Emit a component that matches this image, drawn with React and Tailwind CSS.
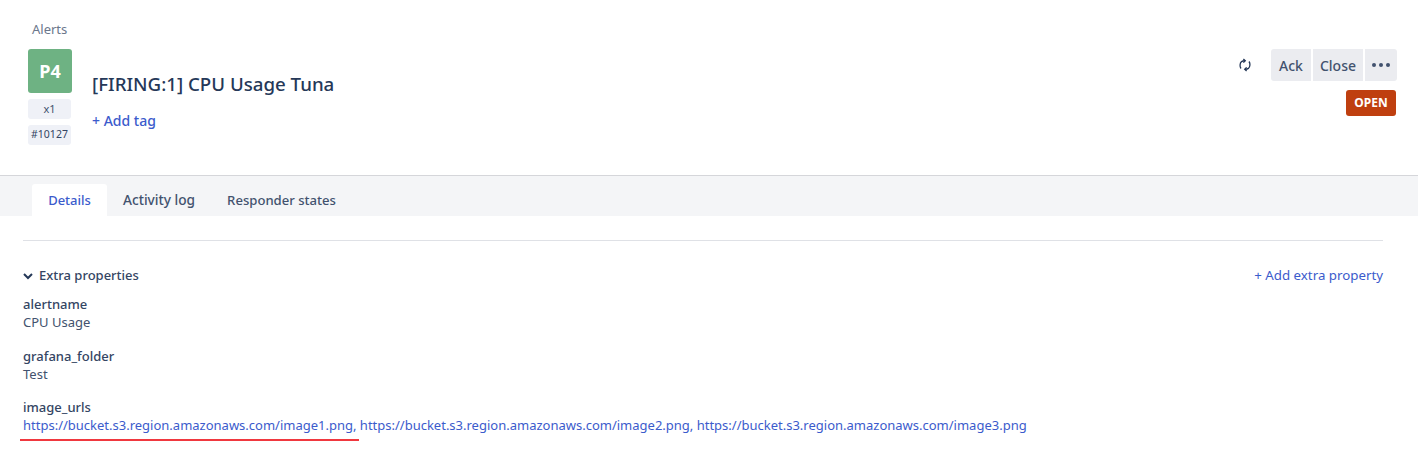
import React from 'react';

const font = "font-['Noto_Sans','Open_Sans',sans-serif]";

const Prop = ({ name, children }) => (
  <div className="mb-[16px]">
    <div className="text-[13px] leading-[18px] font-medium text-[#344563]">{name}</div>
    <div className="text-[13px] leading-[18px] text-[#42526e]">{children}</div>
  </div>
);

const Links = () => (
  <div className="relative w-fit">
    <div className="text-[13px] leading-[18px] text-[#3b5bcc] whitespace-nowrap">
      https://bucket.s3.region.amazonaws.com/image1.png, https://bucket.s3.region.amazonaws.com/image2.png, https://bucket.s3.region.amazonaws.com/image3.png
    </div>
    <div className="absolute left-[-3px] top-[23px] w-[339px] h-[2px] bg-[#f0383f]" />
  </div>
);

export default function App() {
  return (
    <div className={`${font} w-[1418px] h-[461px] bg-white overflow-hidden`}>
      <header className="h-[176px] border-b border-[#d5d6da] relative pl-[28px] pr-[21px] pt-[20px]">
        <div className="pl-[4px] text-[13px] leading-[18px] text-[#6b778c]">Alerts</div>
        <div className="flex mt-[11px]">
          <div className="w-[44px] flex flex-col">
            <div className="h-[44px] rounded-[3px] bg-[#6eb283] text-white font-bold text-[18px] flex items-center justify-center">P4</div>
            <div className="mt-[6px] w-[43px] h-[20px] rounded-[3px] bg-[#eff1f7] text-[11px] text-[#42526e] flex items-center justify-center">x1</div>
            <div className="mt-[6px] w-[43px] h-[20px] rounded-[3px] bg-[#eff1f7] text-[10.5px] text-[#344563] flex items-center justify-center">#10127</div>
          </div>
          <div className="ml-[20px] pt-[21px]">
            <h1 className="text-[18.7px] leading-[28px] font-medium text-[#253858]">[FIRING:1] CPU Usage Tuna</h1>
            <div className="mt-[14px] text-[14px] leading-[18px] font-medium text-[#3b5bcc]">+ Add tag</div>
          </div>
          <div className="ml-auto flex flex-col items-end">
            <div className="flex items-center gap-[2px]">
              <svg className="w-[14px] h-[14px] mr-[17px] text-[#253858]" viewBox="0 0 14 14" fill="none" stroke="currentColor" strokeWidth="1.3">
                <path d="M3 10.5C1.6 8.6 1.7 5.2 3.6 3.6c1-.7 2.2-.9 3.4-.8" />
                <path d="M5.4 1 7.3 2.8 5.4 4.6" />
                <path d="M11 3.5c1.4 1.9 1.3 5.3-.6 6.9-1 .7-2.2.9-3.4.8" />
                <path d="M8.6 9.4 6.7 11.2 8.6 13" />
              </svg>
              <button className="h-[32px] w-[40px] rounded-l-[3px] bg-[#ebecf0] text-[14px] font-medium text-[#42526e]">Ack</button>
              <button className="h-[32px] w-[50px] bg-[#ebecf0] text-[14px] font-medium text-[#42526e]">Close</button>
              <button className="h-[32px] w-[32px] rounded-r-[3px] bg-[#ebecf0] flex items-center justify-center gap-[3px]">
                <span className="w-[4px] h-[4px] rounded-full bg-[#42526e]" />
                <span className="w-[4px] h-[4px] rounded-full bg-[#42526e]" />
                <span className="w-[4px] h-[4px] rounded-full bg-[#42526e]" />
              </button>
            </div>
            <div className="mt-[9px] mr-[1px] w-[50px] h-[26px] rounded-[3px] bg-[#bf3f0f] text-white text-[12px] font-bold flex items-center justify-center">OPEN</div>
          </div>
        </div>
      </header>
      <nav className="h-[40px] bg-[#f4f5f7] pt-[8px] pl-[32px] flex">
        <div className="w-[75px] h-[32px] pt-[1px] rounded-t-[3px] bg-white text-[13px] font-medium text-[#3b5bcc] flex items-center justify-center">Details</div>
        <div className="px-[16px] h-[32px] pt-[1px] text-[13.7px] font-medium text-[#42526e] flex items-center">Activity log</div>
        <div className="px-[16px] h-[32px] pt-[1px] text-[13.1px] font-medium text-[#42526e] flex items-center">Responder states</div>
      </nav>
      <main className="pl-[23px] pr-[35px] pt-[24px]">
        <div className="h-[1px] bg-[#dfe1e6]" />
        <div className="mt-[26px] mb-[10px] flex items-center justify-between h-[18px]">
          <div className="flex items-center text-[13px] font-medium text-[#344563]">
            <svg className="w-[10px] h-[10px] mr-[6px] text-[#253858]" viewBox="0 0 10 10" fill="none" stroke="currentColor" strokeWidth="2">
              <path d="M1 3 5 7 9 3" />
            </svg>
            Extra properties
          </div>
          <div className="text-[13.3px] text-[#3b5bcc]">+ Add extra property</div>
        </div>
        <Prop name="alertname">CPU Usage</Prop>
        <Prop name="grafana_folder">Test</Prop>
        <div className="-mt-[1px] text-[13px] leading-[18px] font-medium text-[#344563]">image_urls</div>
        <Links />
      </main>
    </div>
  );
}
